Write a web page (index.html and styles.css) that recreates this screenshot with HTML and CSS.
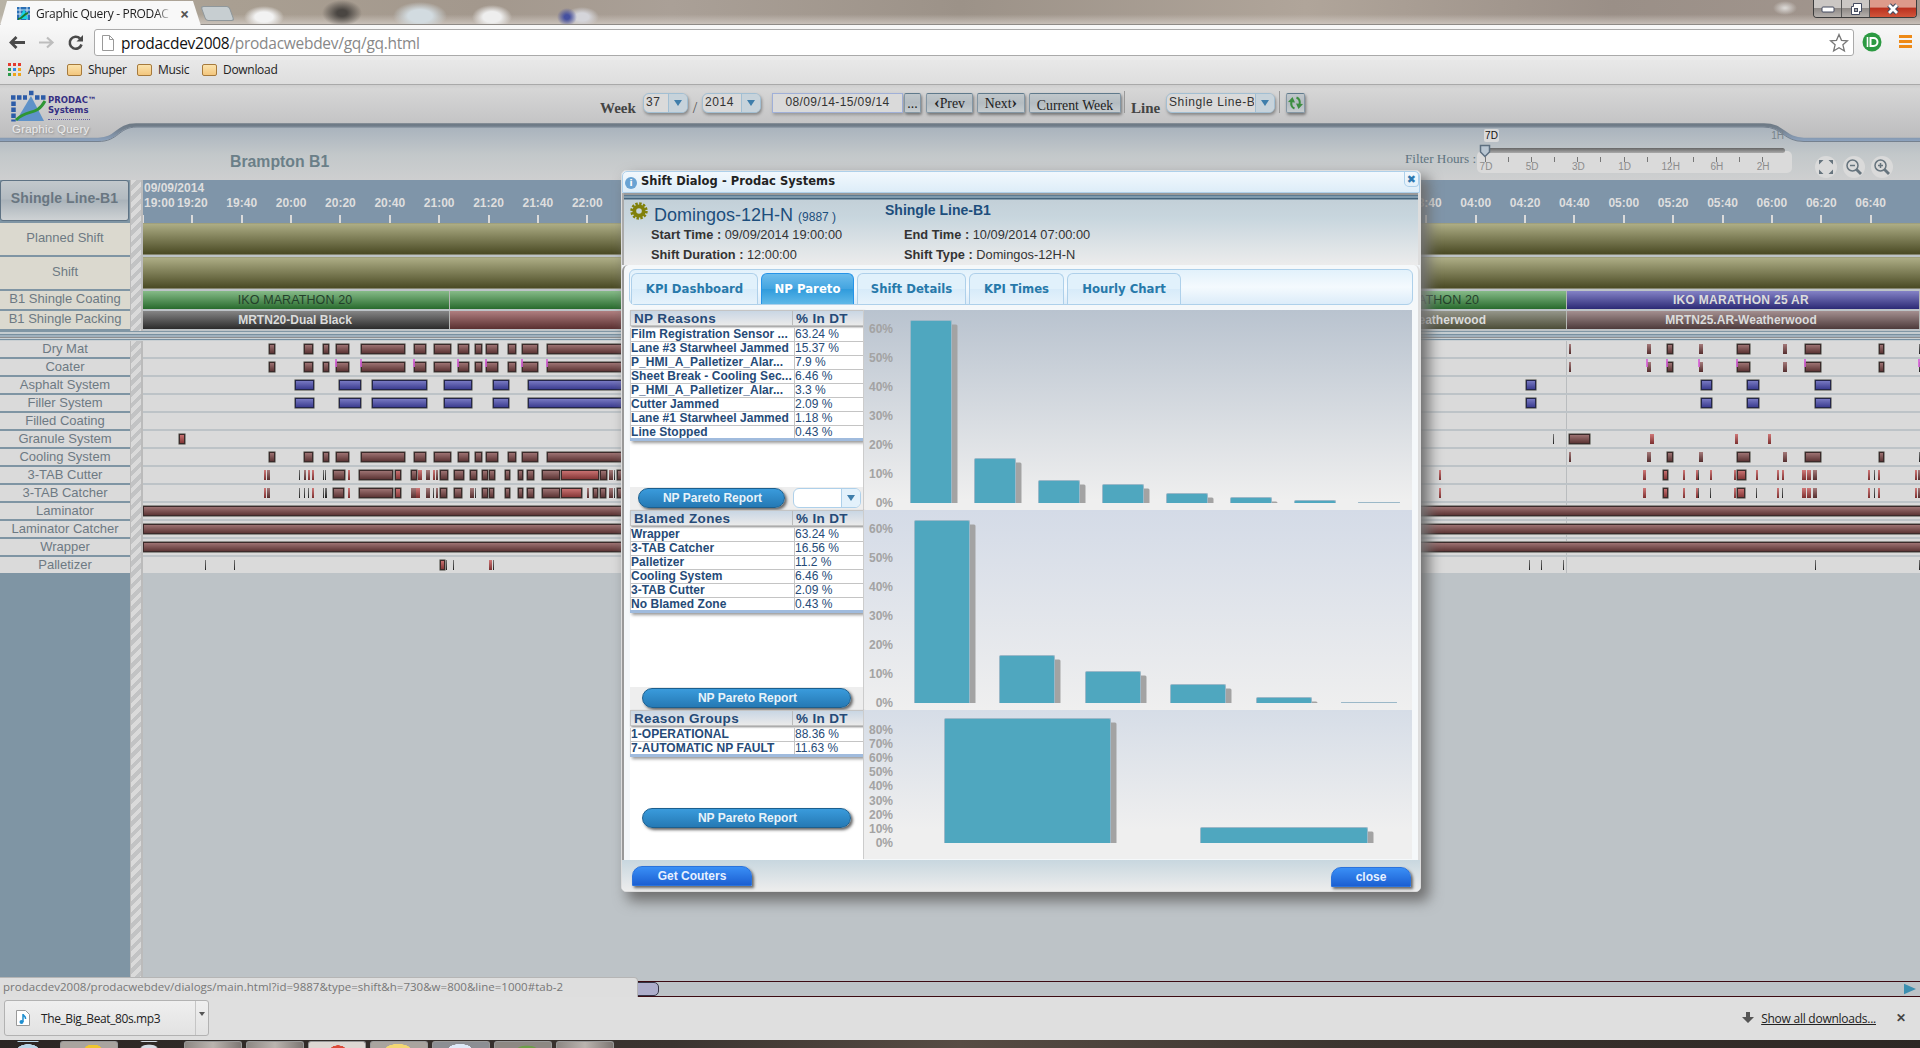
FILE: index.html
```html
<!DOCTYPE html>
<html lang="en">
<head>
    <meta charset="UTF-8">
    <title>Graphic Query - PRODAC</title>
    <link rel="stylesheet" href="styles.css">
</head>
<body>
    <!-- browser window -->
    <div class="tabstrip">
        <div class="tab">
            <svg class="favicon" width="13" height="13" viewBox="0 0 13 13"><rect width="13" height="13" fill="#2a6fb5"/><path d="M0 3h13M0 7h13M3 0v13M10 0v13" stroke="#cfe4f5" stroke-width="1"/><path d="M2 12L7 2l4 10z" fill="#19d3e6"/><path d="M1 12c5 0 5-5 10-6" stroke="#1c7a2d" stroke-width="2" fill="none"/></svg>
            <span>Graphic Query - PRODAC</span>
            <b>×</b>
        </div>
        <div class="new_tab"></div>
        <div class="win_btns">
            <div class="win_btn"><svg width="14" height="8"><rect x="1" y="2" width="12" height="5" rx="1" fill="#fff" stroke="#444b60"/></svg></div>
            <div class="win_btn"><svg width="14" height="14"><path d="M4.500 1.500h8v8h-2v3h-8v-8h2z" fill="#fff" stroke="#444b60"/><rect x="5.500" y="6.500" width="3" height="3" fill="#aaa" stroke="#444b60"/></svg></div>
            <div class="win_btn win_close"><svg width="14" height="12"><path d="M3 2l8 8M11 2l-8 8" stroke="#444b60" stroke-width="5"/><path d="M3 2l8 8M11 2l-8 8" stroke="#fff" stroke-width="2.800"/></svg></div>
        </div>
    </div>
    <div class="toolbar">
        <svg class="nav" width="84" height="30" viewBox="0 0 84 30">
            <path d="M11 14.500h14M16.500 9l-5.500 5.500 5.500 5.500" stroke="#4a4a4a" stroke-width="2.800" fill="none"/>
            <path d="M39 14.500h13M47 9.500l5.500 5-5.500 5" stroke="#bdbdbd" stroke-width="2.200" fill="none"/>
            <path d="M80 10.500a6 6 0 1 0 1.500 6" stroke="#4a4a4a" stroke-width="2.600" fill="none"/><path d="M83 7v6.500h-6.500z" fill="#4a4a4a"/>
        </svg>
        <div class="omnibox">
            <svg width="12" height="16"><path d="M.5.500h7l4 4v11h-11zM7.500.500v4h4" fill="#fff" stroke="#999"/></svg>
            <span><i>prodacdev2008</i>/prodacwebdev/gq/gq.html</span>
            <svg class="star" width="20" height="20" viewBox="0 0 20 20"><path d="M10 1.500l2.500 5.800 6 .500-4.600 4 1.500 6.200-5.400-3.300-5.400 3.300 1.500-6.200-4.600-4 6-.500z" fill="none" stroke="#777" stroke-width="1.300"/></svg>
        </div>
        <svg class="ext" width="20" height="20" viewBox="0 0 20 20"><circle cx="10" cy="10" r="9.500" fill="#2c9a42"/><path d="M5.500 5v10" stroke="#fff" stroke-width="1.600"/><path d="M8.500 6h3a4 4 0 0 1 0 8h-3z" fill="none" stroke="#fff" stroke-width="2"/></svg>
        <div class="burger"><u></u><u></u><u></u></div>
    </div>
    <div class="bookmarks">
        <div class="apps"><i class="r"></i><i class="r"></i><i class="r"></i><i class="g"></i><i class="b"></i><i class="y"></i><i class="g"></i><i class="y"></i><i class="y"></i></div>
        <span class="bm_apps">Apps</span>
        <i class="folder"></i><span class="bm_1">Shuper</span>
        <i class="folder"></i><span class="bm_2">Music</span>
        <i class="folder"></i><span>Download</span>
    </div>

    <div class="page">
        <div class="head">
            <svg class="head_shape" width="1920" height="95" viewBox="0 0 1920 95">
                <defs>
                    <linearGradient id="hg" x1="0" y1="0" x2="0" y2="1"><stop offset="0" stop-color="#c4c4c4"/><stop offset=".15" stop-color="#d6d6d6"/><stop offset="1" stop-color="#bcbcbd"/></linearGradient>
                    <linearGradient id="hs" gradientUnits="userSpaceOnUse" x1="0" y1="38" x2="0" y2="56"><stop offset="0" stop-color="#6d7984"/><stop offset=".35" stop-color="#74818f"/><stop offset="1" stop-color="#8ca2be"/></linearGradient>
                </defs>
                <path d="M-5 -5H1925V54.500H1804C1784 54.500 1784 40 1764 40H136C116 40 118 54.500 98 54.500H-5Z" fill="url(#hg)" stroke="url(#hs)" stroke-width="3.600"/>
                <path d="M0 56.500H98C119 56.500 118 42 137 42H1763C1783 42 1783 56.500 1804 56.500H1920" fill="none" stroke="#75818f" stroke-width="1"/>
            </svg>
            <div class="logo">
                <svg width="38" height="32" viewBox="0 0 38 32">
                    <path d="M1 7.500h16M25 7.500h11M3.500 11.500v20M19 3h5" stroke="#2d5ca8" stroke-width="4.500" stroke-dasharray="4.500 1.500" fill="none"/>
                    <path d="M6 31L21 6l13 25z" fill="#5f92c8"/>
                    <path d="M6 30c12-12 20-3 29-19" stroke="#2f9634" stroke-width="3" fill="none"/>
                </svg>
                <div class="logo_txt">PRODAC™<br>Systems<hr></div>
                <p>Graphic Query</p>
            </div>
            <div class="controls">
                <label class="lb_week">Week</label>
                <div class="sel sel_week"><span>37</span><i></i></div>
                <span class="slash">/</span>
                <div class="sel sel_year"><span>2014</span><i></i></div>
                <div class="date">08/09/14-15/09/14</div>
                <button class="dots">...</button>
                <button class="prev"><b>‹</b>Prev</button>
                <button class="next">Next<b>›</b></button>
                <button class="cur">Current Week</button>
                <div class="sep"></div>
                <label class="lb_line">Line</label>
                <div class="sel sel_line"><span>Shingle Line-B1</span><i></i></div>
                <div class="sep sep2"></div>
                <button class="refresh"><svg width="15" height="16" viewBox="0 0 15 16"><path d="M6.500 13.500C3 12 2.800 9 3.500 6M8.500 2.500c3.500 1.500 3.700 4.500 3 7.500" stroke="#3e8e41" stroke-width="2" fill="none"/><path d="M0 7l4.500-5L7 7.500zM15 9l-4.500 5L8 8.500z" fill="#3e8e41"/></svg></button>
            </div>
            <div class="sub">
                <h1>Brampton B1</h1>
                <span class="filter_lb">Filter Hours :</span>
                <div class="slider">
                    <div class="bubbles"><b>7D</b><em>1H</em></div>
                    <div class="track"></div>
                    <svg class="knob" width="12" height="14" viewBox="0 0 12 14"><path d="M1.500 1.500h9v6.500l-4.500 4.500-4.500-4.500z" fill="#b9c6d2" stroke="#5d6f80" stroke-width="1.500"/></svg>
                    <div class="scale" id="scale"></div>
                </div>
                <div class="zooms">
                    <svg width="22" height="22" viewBox="0 0 22 22"><circle cx="11" cy="11" r="11" fill="#dadada"/><path d="M4 4h4.500L4 8.500zM18 4h-4.500L18 8.500zM4 18h4.500L4 13.500zM18 18h-4.500l4.500-4.500z" fill="#66747e"/></svg>
                    <svg width="22" height="22" viewBox="0 0 22 22"><circle cx="11" cy="11" r="11" fill="#dadada"/><circle cx="9.500" cy="9.500" r="5.500" fill="none" stroke="#66747e" stroke-width="1.500"/><path d="M7 9.500h5" stroke="#66747e" stroke-width="1.500"/><path d="M13.500 13.500l4.500 4.500" stroke="#66747e" stroke-width="2.800"/></svg>
                    <svg width="22" height="22" viewBox="0 0 22 22"><circle cx="11" cy="11" r="11" fill="#dadada"/><circle cx="9.500" cy="9.500" r="5.500" fill="none" stroke="#66747e" stroke-width="1.500"/><path d="M7 9.500h5M9.500 7v5" stroke="#66747e" stroke-width="1.500"/><path d="M13.500 13.500l4.500 4.500" stroke="#66747e" stroke-width="2.800"/></svg>
                </div>
            </div>
        </div>

        <div class="gantt gantt_top">
            <div class="labels">
                <div class="line_btn"><button>Shingle Line-B1</button></div>
                <div class="lbl tall">Planned Shift</div>
                <div class="lbl tall">Shift</div>
                <div class="lbl mid">B1 Shingle Coating</div>
                <div class="lbl mid">B1 Shingle Packing</div>
            </div>
            <div class="handle"></div>
            <div class="rows">
                <div class="times" id="times"><span class="day">09/09/2014</span></div>
                <div class="shift"></div>
                <div class="shift"></div>
                <div class="prod">
                    <div class="seg green w1 dark">IKO MARATHON 20</div>
                    <div class="seg green w2 dark"><span>IKO MARATHON 20</span></div>
                    <div class="seg blue w3">IKO MARATHON 25 AR</div>
                </div>
                <div class="prod">
                    <div class="seg black w1">MRTN20-Dual Black</div>
                    <div class="seg red w2a"></div>
                    <div class="seg olive w2b"><span>MRTN20-Weatherwood</span></div>
                    <div class="seg mauve w3">MRTN25.AR-Weatherwood</div>
                </div>
            </div>
        </div>
        <div class="divider"></div>
        <div class="gantt gantt_low">
            <div class="labels" id="labels"></div>
            <div class="handle"></div>
            <div class="rows" id="rows"></div>
        </div>

        <div class="hscroll"><div class="thumb"></div><i></i></div>
        <div class="status">prodacdev2008/prodacwebdev/dialogs/main.html?id=9887&amp;type=shift&amp;h=730&amp;w=800&amp;line=1000#tab-2</div>

        <!-- shift dialog -->
        <div class="dialog">
            <div class="dlg_title">
                <i>i</i><span>Shift Dialog - Prodac Systems</span>
                <div class="dlg_x">✖</div>
            </div>
            <div class="dlg_head">
                <svg class="gear" width="18" height="18" viewBox="0 0 18 18"><circle cx="9" cy="9" r="7.400" fill="none" stroke="#80800a" stroke-width="2.600" stroke-dasharray="2.400 1.474"/><circle cx="9" cy="9" r="4.700" fill="none" stroke="#80800a" stroke-width="3.800"/></svg>
                <div class="dlg_left">
                    <h2>Domingos-12H-N <small>(9887 )</small></h2>
                    <p><b>Start Time :</b> 09/09/2014 19:00:00</p>
                    <p><b>Shift Duration :</b> 12:00:00</p>
                </div>
                <div class="dlg_right">
                    <h3>Shingle Line-B1</h3>
                    <p><b>End Time :</b> 10/09/2014 07:00:00</p>
                    <p><b>Shift Type :</b> Domingos-12H-N</p>
                </div>
            </div>
            <div class="dlg_body">
                <div class="tabs">
                    <a class="t1">KPI Dashboard</a>
                    <a class="t2 on">NP Pareto</a>
                    <a class="t3">Shift Details</a>
                    <a class="t4">KPI Times</a>
                    <a class="t5">Hourly Chart</a>
                </div>
                <div class="pareto">
                    <div class="side">
                        <div class="thead"><span>NP Reasons</span><span>% In DT</span></div>
                        <div class="tbody">
                            <div><b>Film Registration Sensor ...</b><span>63.24 %</span></div>
                            <div><b>Lane #3 Starwheel Jammed</b><span>15.37 %</span></div>
                            <div><b>P_HMI_A_Palletizer_Alar...</b><span>7.9 %</span></div>
                            <div><b>Sheet Break - Cooling Sec...</b><span>6.46 %</span></div>
                            <div><b>P_HMI_A_Palletizer_Alar...</b><span>3.3 %</span></div>
                            <div><b>Cutter Jammed</b><span>2.09 %</span></div>
                            <div><b>Lane #1 Starwheel Jammed</b><span>1.18 %</span></div>
                            <div><b>Line Stopped</b><span>0.43 %</span></div>
                        </div>
                        <div class="actions">
                            <button class="report short">NP Pareto Report</button>
                            <div class="sel sel_dlg"><span></span><i></i></div>
                        </div>
                    </div>
                    <div class="chart c1" data-max="60" data-step="29" data-scale="2.9" data-values="63.24,15.37,7.9,6.46,3.3,2.09,1.18,0.43"></div>
                </div>
                <div class="pareto">
                    <div class="side">
                        <div class="thead"><span>Blamed Zones</span><span>% In DT</span></div>
                        <div class="tbody">
                            <div><b>Wrapper</b><span>63.24 %</span></div>
                            <div><b>3-TAB Catcher</b><span>16.56 %</span></div>
                            <div><b>Palletizer</b><span>11.2 %</span></div>
                            <div><b>Cooling System</b><span>6.46 %</span></div>
                            <div><b>3-TAB Cutter</b><span>2.09 %</span></div>
                            <div><b>No Blamed Zone</b><span>0.43 %</span></div>
                        </div>
                        <div class="actions"><button class="report">NP Pareto Report</button></div>
                    </div>
                    <div class="chart c2" data-max="60" data-step="29" data-scale="2.9" data-values="63.24,16.56,11.2,6.46,2.09,0.43"></div>
                </div>
                <div class="pareto last">
                    <div class="side">
                        <div class="thead"><span>Reason Groups</span><span>% In DT</span></div>
                        <div class="tbody">
                            <div><b>1-OPERATIONAL</b><span>88.36 %</span></div>
                            <div><b>7-AUTOMATIC NP FAULT</b><span>11.63 %</span></div>
                        </div>
                        <div class="actions"><button class="report">NP Pareto Report</button></div>
                    </div>
                    <div class="chart c3" data-max="80" data-step="14.150" data-scale="1.415" data-values="88.36,11.63"></div>
                </div>
            </div>
            <div class="dlg_foot">
                <button>Get Couters</button>
                <button class="dlg_close">close</button>
            </div>
        </div>
    </div>

    <div class="shelf">
        <div class="dl">
            <svg width="14" height="16" viewBox="0 0 14 16"><path d="M.5.500h9l4 4v11h-13z" fill="#fff" stroke="#999"/><path d="M7 4v8M7 4c0 2 3 2 2.500 5" stroke="#1f8fd0" stroke-width="1.500" fill="none"/><circle cx="5.500" cy="12" r="2" fill="#1f8fd0"/></svg>
            <span>The_Big_Beat_80s.mp3</span>
            <i></i>
        </div>
        <svg class="dl_arrow" width="12" height="12" viewBox="0 0 12 12"><path d="M4 0h4v5h4l-6 6-6-6h4z" fill="#555"/></svg>
        <a>Show all downloads...</a>
        <b>✕</b>
    </div>
    <div class="taskbar">
        <i class="start"></i><i class="ie"></i><i class="off vs"></i><i></i><i></i><i class="chrome"></i><i class="fold"></i><i class="doc"></i><i class="xl"></i><i></i>
    </div>
    <script src="script.js"></script>
</body>
</html>
```
FILE: styles.css
```css
* {
    box-sizing: border-box;
}

body {
    margin: 0;
    height: 1048px;
    overflow: hidden;
    display: flex;
    flex-direction: column;
    font-family: "Liberation Sans", Arial, sans-serif;
    font-size: 13px;
    background: #bdc3c7;
}

button {
    font-family: inherit;
    padding: 0;
    margin: 0;
    white-space: nowrap;
}

h1, h2, h3, p {
    margin: 0;
}

i {
    font-style: normal;
}

/* browser */
.tabstrip {
    height: 25px;
    flex: none;
    display: flex;
    background:
        radial-gradient(ellipse 20px 11px at 264px 17px, #f2f2f2 45%, transparent),
        radial-gradient(ellipse 20px 13px at 342px 13px, #4a4642 25%, transparent),
        radial-gradient(ellipse 27px 14px at 420px 16px, #d2dbe0 45%, transparent),
        radial-gradient(ellipse 20px 12px at 492px 17px, #eee 45%, transparent),
        radial-gradient(ellipse 10px 9px at 567px 17px, #4550a0 25%, transparent),
        radial-gradient(ellipse 17px 10px at 582px 17px, #d5d5da 40%, transparent),
        radial-gradient(ellipse 12px 7px at 1785px 8px, #d8d5d2 10%, transparent),
        linear-gradient(to bottom, transparent 60%, rgba(215, 208, 202, 0.7)),
        linear-gradient(to right, #b8b3a6, #a99f92 12%, #a3988d 25%, #aaa097 35%, #9c9288 50%, #b0a59a 68%, #9a8f87 84%, #a3978f);
    border-bottom: 1px solid #8e8a86;
}

.tab {
    width: 201px;
    height: 25px;
    margin-top: 1px;
    padding-left: 17px;
    display: flex;
    align-items: center;
    background: #f8f8f8;
    clip-path: polygon(0 100%, 7px 0, 193px 0, 100% 100%);
    font-family: "Open Sans", sans-serif;
    font-size: 12px;
    color: #222;
}

.tab span {
    width: 138px;
    margin-left: 6px;
    overflow: hidden;
    white-space: nowrap;
    letter-spacing: -0.3px;
    -webkit-mask-image: linear-gradient(to right, #000 120px, transparent 136px);
}

.tab b {
    margin-left: 6px;
    font-size: 16px;
    color: #555;
}

.new_tab {
    width: 29px;
    height: 15px;
    margin: 6px 0 0 2px;
    transform: skewX(20deg);
    border: 1px solid #8f979b;
    border-radius: 3px;
    background: #c7ced1;
}

.win_btns {
    margin: 0 3px 0 auto;
    height: 18px;
    display: flex;
    border: 1px solid #3c3c3c;
    border-top: 0;
    border-radius: 0 0 4px 4px;
    overflow: hidden;
}

.win_btn {
    width: 28px;
    display: flex;
    align-items: center;
    justify-content: center;
    background: linear-gradient(#cbc7c4 45%, #8f8a87 50%, #b5b0ac);
    border-right: 1px solid #555;
}

.win_close {
    width: 46px;
    border: 0;
    background: linear-gradient(#dd9a8b 40%, #bb3220 50%, #d2553b);
}

.toolbar {
    height: 35px;
    flex: none;
    display: flex;
    background: linear-gradient(#f8f8f8, #ebebeb);
}

.nav {
    margin-top: 3px;
}

.omnibox {
    width: 1760px;
    height: 27px;
    margin: 4px 0 0 10px;
    padding: 0 4px 0 7px;
    display: flex;
    align-items: center;
    background: #fff;
    border: 1px solid #aaa;
    border-radius: 3px;
    font-family: "Open Sans", sans-serif;
    font-size: 15.5px;
    letter-spacing: -0.28px;
    color: #888;
}

.omnibox span {
    margin-left: 7px;
}

.omnibox i {
    color: #111;
}

.star {
    margin-left: auto;
}

.ext {
    margin: 7px 0 0 8px;
}

.burger {
    margin: 10px 0 0 17px;
}

.burger u {
    display: block;
    width: 13px;
    height: 3px;
    margin-bottom: 2px;
    background: #ee8a17;
}

.bookmarks {
    height: 25px;
    flex: none;
    display: flex;
    align-items: center;
    padding: 0 0 5px 8px;
    background: linear-gradient(#e8e8e8, #dedede);
    border-bottom: 1px solid #a9a9a9;
    font-family: "Open Sans", sans-serif;
    font-size: 12px;
    letter-spacing: -0.3px;
    color: #222;
}

.apps {
    display: grid;
    grid-template-columns: repeat(3, 3px);
    gap: 2px;
}

.apps i {
    height: 3px;
}

.r { background: #e33b2e; }
.g { background: #2c9b4b; }
.b { background: #2f87e5; }
.y { background: #eea51d; }

.bm_apps { width: 39px; margin-left: 7px; }
.bm_1 { width: 49px; }
.bm_2 { width: 44px; }

.folder {
    width: 15px;
    height: 12px;
    margin-right: 6px;
    border: 1px solid #a67a3c;
    border-radius: 2px;
    background: linear-gradient(#fbe3ad, #f3c67d);
}

/* page header */
.page {
    position: relative;
    height: 912px;
    flex: none;
    display: flex;
    flex-direction: column;
    background: #bdc3c7;
    overflow: hidden;
}

.head {
    position: relative;
    height: 95px;
    flex: none;
    display: grid;
    grid-template-columns: 600px 1fr;
    grid-template-rows: 42px 53px;
    background: linear-gradient(#a9b3bd 42px, #c3c8ca 70px, #cecfd0);
}

.head_shape {
    position: absolute;
    left: 0;
    top: 0;
}

.logo {
    position: relative;
    height: 52px;
    padding: 5px 0 0 10px;
    display: grid;
    grid-template-columns: 38px 60px;
    grid-template-rows: 32px 14px;
}

.logo_txt {
    font: bold 8.5px/10px "DejaVu Sans", sans-serif;
    color: #352f83;
    padding-top: 5px;
    white-space: nowrap;
}

.logo_txt hr {
    width: 42px;
    margin: 4px 0 0;
    border: 0;
    border-top: 1px dotted #6660a0;
}

.logo p {
    grid-column: span 2;
    padding-left: 2px;
    font-size: 11.5px;
    letter-spacing: 0.2px;
    color: #ececec;
    text-shadow: 1px 1px 2px #888;
    line-height: 14px;
}

.controls {
    position: relative;
    height: 42px;
    display: flex;
    align-items: flex-start;
    padding-top: 8px;
}

.controls label {
    font: bold 15px/24px "Liberation Serif", serif;
    color: #444;
    padding-top: 3px;
}

.lb_week { width: 43px; }

.sel {
    height: 20px;
    display: flex;
    border: 1px solid #a2bfd3;
    border-radius: 6px;
    background: #dadada;
    box-shadow: 1px 2px 3px #888;
    font-size: 12px;
    line-height: 17px;
    color: #333;
    overflow: hidden;
}

.sel span {
    flex: 1;
    padding-left: 2px;
    overflow: hidden;
    white-space: nowrap;
    letter-spacing: 0.6px;
}

.sel i {
    width: 19px;
    display: flex;
    align-items: center;
    justify-content: center;
    border-left: 1px solid #a2bfd3;
    background: #c7d3db;
}

.sel i::after {
    content: "";
    border: 4.5px solid transparent;
    border-top: 6px solid #3f7eab;
    border-bottom: 0;
}

.sel_week { width: 45px; }
.slash { width: 14px; text-align: center; font: 16px/30px "Liberation Serif", serif; color: #555; }
.sel_year { width: 59px; margin-right: 11px; }

.date {
    width: 131px;
    height: 20px;
    border: 1px solid #a0b0d8;
    background: #dadada;
    box-shadow: 1px 2px 3px #999;
    font-size: 12px;
    line-height: 16px;
    text-align: center;
    letter-spacing: 0.4px;
    color: #333;
}

.controls button {
    height: 20px;
    border: 1px solid #8497a5;
    border-top-color: #5f7a8c;
    border-radius: 2px;
    background: linear-gradient(#c0c7cb, #b4bcc1 50%, #c6cccf);
    box-shadow: 1px 2px 3px #777;
    font: 13.8px/17px "Liberation Serif", serif;
    color: #222;
}

.controls button b {
    font-size: 17px;
    line-height: 15px;
}

.controls .dots { width: 17px; margin: 0 5px 0 1px; }
.controls .prev { width: 47px; margin-right: 4px; }
.controls .next { width: 48px; margin-right: 4px; }
.controls .cur { width: 92px; line-height: 23px; }
.sep { width: 1px; height: 22px; background: #999; margin: -2px 6px 0 3px; }
.lb_line { width: 35px; }
.sel_line { width: 109px; }
.sel_line span { flex: none; width: 87px; }
.sel_line i { margin-left: auto; }
.sep2 { margin-left: 4px; }
.controls .refresh { width: 19px; line-height: 0; }

.sub {
    position: relative;
    grid-column: 1 / 3;
    display: flex;
    padding-left: 230px;
}

.sub h1 {
    width: 1175px;
    font-size: 15.8px;
    line-height: 18px;
    padding-top: 26px;
    color: #6b7f88;
}

.filter_lb {
    width: 72px;
    padding-top: 24px;
    font: 13.2px/16px "Liberation Serif", serif;
    white-space: nowrap;
    color: #5f7480;
}

.slider {
    position: relative;
    width: 315px;
}

.bubbles {
    display: flex;
    justify-content: space-between;
    padding: 2px 8px 0 7px;
    height: 24px;
    font-size: 10px;
}

.bubbles b {
    width: 15px;
    height: 13px;
    font-weight: normal;
    line-height: 13px;
    text-align: center;
    background: #dadada;
    border-radius: 2px;
    color: #111;
}

.bubbles em {
    font-style: normal;
    line-height: 13px;
    color: #78838b;
}

.track {
    position: relative;
    z-index: 1;
    height: 5px;
    margin: -3px 7px 0 8px;
    border-radius: 3px;
    background: linear-gradient(#666, #aaa);
}

.knob {
    position: absolute;
    z-index: 2;
    left: 2px;
    top: 17px;
}

.scale {
    height: 22px;
    margin-top: -2px;
    padding-left: 8px;
    display: flex;
    background: #dadada;
    border-radius: 5px;
    font-size: 10px;
    color: #8c8c8c;
}

.scale span {
    width: 23.1px;
    flex: none;
    padding-top: 6px;
}

.scale span::before {
    content: "";
    display: block;
    width: 1px;
    height: 5px;
    background: #777;
}

.scale em {
    display: block;
    width: 24px;
    margin-left: -11px;
    font-style: normal;
    text-align: center;
    line-height: 10px;
}

.zooms {
    display: flex;
    gap: 6px;
    padding: 29px 0 0 23px;
}

/* timeline */
.gantt {
    display: flex;
    flex: none;
}

.gantt_low {
    flex: 1;
}

.labels {
    width: 130px;
    flex: none;
    background: #7f95a4;
}

.line_btn {
    height: 43px;
}

.line_btn button {
    width: 129px;
    height: 41px;
    border: 1px solid #5f7384;
    border-radius: 3px;
    background: linear-gradient(#c2c8cc, #b3bbc1 45%, #aab3ba 50%, #ced2d4);
    font-size: 14px;
    font-weight: bold;
    letter-spacing: 0.1px;
    color: #697681;
    padding-bottom: 5px;
}

.lbl {
    height: 18px;
    line-height: 15px;
    text-align: center;
    background: #dadada;
    border-bottom: 2px solid #7f95a4;
    color: #6d7983;
    white-space: nowrap;
}

.lbl.tall,
.lbl.mid {
    background: #dbd9cf;
}

.lbl.tall { height: 34px; line-height: 29px; }
.lbl.mid { height: 20px; line-height: 15px; }

.handle {
    width: 13px;
    flex: none;
    border: 1px solid #bbb;
    border-width: 0 2px 0 1px;
    background: repeating-linear-gradient(135deg, #dadada 0 4px, #c2c3c4 4px 8px);
}

.rows {
    flex: 1;
    overflow: hidden;
}

.times {
    position: relative;
    height: 43px;
    background: #7f95a9;
    font-size: 12px;
    font-weight: bold;
    color: #dedede;
}

.day {
    display: block;
    padding-left: 1px;
    line-height: 16px;
}

.times i {
    position: absolute;
    top: 16px;
    width: 40px;
    margin-left: -20px;
    line-height: 15px;
    text-align: center;
}

.times i::after {
    content: "";
    display: block;
    width: 2px;
    height: 8px;
    margin: 4px auto 0;
    background: #dadada;
}

.times .first {
    margin-left: 1px;
    text-align: left;
}

.times .first::after {
    margin-left: -1px;
    width: 1px;
}

.shift {
    height: 32px;
    margin-bottom: 2px;
    border-top: 1px solid #a0a07c;
    border-bottom: 1px solid #85856e;
    background: linear-gradient(#adad85, #4a4a24);
}

.prod {
    height: 18px;
    margin-bottom: 2px;
    display: flex;
}

.seg {
    flex: none;
    border-right: 1px solid #b5b8b5;
    font-size: 12px;
    font-weight: bold;
    line-height: 19px;
    text-align: center;
    letter-spacing: 0.02px;
    white-space: nowrap;
    overflow: hidden;
    color: #dcdcdc;
}

.seg.blue {
    letter-spacing: 0.3px;
}

.w1 { width: 307px; padding-right: 2px; }
.w2 { width: 1117px; }
.w2a { width: 860px; }
.w2b { width: 257px; text-align: right; padding-right: 80px; }
.w3 { width: 353px; padding-right: 4px; }

.seg.dark {
    font-weight: normal;
    font-size: 12.5px;
    letter-spacing: 0.1px;
    color: #23402a;
}

.seg.w2 {
    text-align: right;
    padding-right: 87px;
}

.green { background: linear-gradient(#86bb88, #286a2d); }
.blue { background: linear-gradient(#8482c6, #2c2a75); }
.black { background: linear-gradient(#858585, #2b2b2b); }
.red { background: linear-gradient(#b07f80, #592f30); }
.olive { background: linear-gradient(#95968a, #4c4d38); }
.mauve { background: linear-gradient(#a48f90, #4d3a3b); }

.divider {
    height: 10px;
    flex: none;
    background: linear-gradient(#8096a4 1px, #c4ccd0 1px 3px, #7890a0 3px 4px, #9fb0bd 4px 6px, #8d8f91 6px 7px, #c9cfd2 7px 8px, #7790a2 8px 9px, #c9cfd2 9px);
}

.row {
    position: relative;
    height: 18px;
    background: linear-gradient(to right, transparent 1423px, #b9bcbe 1423px 1424px, transparent 1424px), #dadada;
    border-bottom: 2px solid #bdc3c7;
}

.ev {
    position: absolute;
    top: 3px;
    height: 10px;
    background: linear-gradient(#a57a7a, #552e2e);
}

.ev.box {
    top: 2px;
    height: 12px;
    border: 1px solid #8f8f8b;
    border-radius: 1px;
    box-shadow: inset 0 0 0 1px #3b2a2a;
}

.ev.r { background: linear-gradient(#d07878, #7c3030); }
.ev.u { background: linear-gradient(#7f80c8, #35368a); box-shadow: inset 0 0 0 1px #24264a; }
.ev.k { background: linear-gradient(#777, #222); }
.ev.m { background: #d65fd6; top: 0; height: 8px; z-index: 1; opacity: 0.85; }

.hscroll {
    position: absolute;
    left: 0;
    right: 0;
    bottom: 0;
    height: 16px;
    border-top: 1px solid #3c0b12;
    border-bottom: 1px solid #3c0b12;
    background: #bdc3c7;
}

.hscroll .thumb {
    width: 659px;
    height: 14px;
    border: 1px solid #334;
    border-radius: 0 5px 5px 0;
    background: #aeaecb;
}

.hscroll i {
    position: absolute;
    right: 4px;
    top: 0;
    width: 15px;
    height: 14px;
    background: #3c8fb0;
    clip-path: polygon(20% 12%, 100% 50%, 20% 88%);
}

.status {
    position: absolute;
    left: 0;
    bottom: -1px;
    width: 638px;
    height: 21px;
    padding-left: 3px;
    line-height: 18px;
    background: #dedede;
    border: 1px solid #b5b5b5;
    border-left: 0;
    border-radius: 0 4px 0 0;
    font-family: "Open Sans", sans-serif;
    font-size: 11.5px;
    letter-spacing: 0.02px;
    color: #777;
    white-space: nowrap;
}

/* dialog */
.dialog {
    position: absolute;
    left: 621px;
    top: 85px;
    width: 800px;
    height: 722px;
    display: flex;
    flex-direction: column;
    border: 1px solid #ddd;
    border-radius: 5px;
    background: #f0f3f6;
    box-shadow: 7px 8px 14px 1px #6f6f6f;
}

.dlg_title {
    height: 22px;
    display: flex;
    background: linear-gradient(#f2f8fd, #ddedf8);
    border: 1px solid #aed0ea;
    border-radius: 5px 5px 0 0;
    font: bold 11.5px/18px "DejaVu Sans", sans-serif;
    letter-spacing: 0.05px;
    color: #222;
}

.dlg_title i {
    width: 12px;
    height: 12px;
    margin: 5px 4px 0 2px;
    border-radius: 6px;
    background: #69a3d3;
    color: #fff;
    font-size: 9px;
    line-height: 12px;
    text-align: center;
}

.dlg_x {
    width: 15px;
    height: 15px;
    margin-left: auto;
    border: 1px solid #aed0ea;
    border-top: 0;
    border-radius: 0 4px 4px 5px;
    font-size: 11px;
    line-height: 15px;
    text-align: center;
    color: #2e78b0;
}

.dlg_head {
    height: 72px;
    display: flex;
    padding-top: 7px;
    border-left: 2px solid #aaa;
    border-right: 2px solid #ddd;
    background: linear-gradient(#999 2px, #5b7b92 2px 3px, #7f9bae 3px 5px, #45657d 5px 6px, #c3d0d8 7px, #c8d6de 25px, #ececec);
    font-size: 12.8px;
    color: #333;
}

.gear {
    margin: 2px 0 0 6px;
}

.dlg_left {
    width: 240px;
    padding-left: 6px;
}

.dlg_left h2 {
    height: 25px;
    font-size: 18px;
    font-weight: normal;
    line-height: 30px;
    color: #1d4e7c;
    white-space: nowrap;
}

.dlg_left small {
    font-size: 12px;
}

.dlg_left p {
    margin-left: -3px;
    line-height: 20px;
}

.dlg_right h3 {
    height: 25px;
    margin-left: -3px;
    font-size: 14px;
    line-height: 20px;
    color: #1d4e7c;
}

.dlg_right p {
    margin-left: 16px;
    line-height: 20px;
}

.dlg_body {
    height: 595px;
    padding: 3px 6px 0 6px;
    border-left: 2px solid #999;
    border-right: 2px solid #ddd;
    border-radius: 6px 6px 0 0;
    background: #f5f8fa;
}

.tabs {
    height: 36px;
    margin: 1px -1px 5px -1px;
    padding: 3px 1px 0;
    display: flex;
    align-items: stretch;
    border: 1px solid #aed0ea;
    border-radius: 6px;
    background: linear-gradient(#e2f1fb, #f4fafe 50%, #dcecf9);
    font: bold 11.7px/31px "DejaVu Sans", sans-serif;
    color: #2779aa;
}

.tabs a {
    border: 1px solid #aed0ea;
    border-bottom: 0;
    border-radius: 6px 6px 0 0;
    background: linear-gradient(#e1f1fb 50%, #d7ebf9 50%, #e6f2fb);
    text-align: center;
    white-space: nowrap;
    margin-right: 3px;
}

.tabs .on {
    background: linear-gradient(#6cbcec, #43a4e0 50%, #2f9bdc 50%, #5fb8e8);
    border-color: #2694e8;
    color: #fff;
}

.t1 { width: 127px; }
.t2 { width: 93px; }
.t3 { width: 109px; }
.t4 { width: 95px; }
.t5 { width: 114px; }

.pareto {
    height: 200px;
    margin-left: 0;
    display: flex;
}

.pareto.last {
    height: 151px;
}

.side {
    width: 233px;
    display: flex;
    flex-direction: column;
    background: #fff;
}

.thead {
    width: 234px;
    height: 16px;
    margin-bottom: 2px;
    flex: none;
    display: flex;
    border: 1px solid #c4c4c4;
    background: linear-gradient(#c9d6e4, #eaeaea);
    box-shadow: 1px 1px 2px #888;
    font-size: 13.5px;
    font-weight: bold;
    line-height: 15px;
    letter-spacing: 0.35px;
    color: #254a77;
}

.thead span:first-child {
    width: 162px;
    padding-left: 3px;
    border-right: 1px solid #bbb;
}

.thead span {
    padding-left: 3px;
}

.tbody {
    border-bottom: 3px solid #a0bbdd;
    box-shadow: 2px 2px 3px #999;
    font-size: 12px;
    line-height: 12px;
    color: #254a77;
}

.tbody div {
    height: 14px;
    display: flex;
    border-left: 1px solid #ccc;
    border-bottom: 1px solid #c4c4c4;
    white-space: nowrap;
}

.tbody div:last-child {
    height: 12px;
    border-bottom: 0;
}

.tbody b {
    width: 164px;
    border-right: 1px solid #c4c4c4;
    letter-spacing: 0.05px;
    overflow: hidden;
}

.actions {
    height: 23px;
    margin-top: auto;
    padding-top: 1px;
    display: flex;
    background: #eee;
}

.last .actions {
    margin-bottom: 31px;
    background: #fff;
}

.report {
    width: 209px;
    height: 20px;
    margin-left: 12px;
    padding-left: 2px;
    border: 1px solid #1c5f8e;
    border-radius: 10px;
    background: linear-gradient(#3a9bdc, #2579b4);
    box-shadow: 2px 2px 3px #666;
    font-size: 12px;
    font-weight: bold;
    line-height: 17px;
    color: #e8f3fa;
}

.report.short {
    width: 147px;
    margin: 0 8px;
}

.sel_dlg {
    width: 68px;
    background: #fff;
    border-color: #aed0ea;
    box-shadow: none;
}

.sel_dlg i {
    background: #e3f1fb;
    border-color: #aed0ea;
}

.chart {
    width: 549px;
    padding-bottom: 7px;
    display: flex;
    align-items: flex-end;
    border-left: 1px solid #ccc;
    background: linear-gradient(#d4dbe7, #efefef);
}

.c1 {
    background: linear-gradient(#b9c3cf, #efefef 95%);
}

.c3 {
    height: 149px;
    padding-bottom: 16px;
    background: linear-gradient(#d6dde7, #efefef 80%);
}

.axis {
    width: 29px;
    flex: none;
    margin-bottom: -7px;
    display: flex;
    flex-direction: column;
    font-size: 12px;
    font-weight: bold;
    text-align: right;
    color: #a3a3a3;
}

.axis span {
    display: flex;
    align-items: flex-end;
    justify-content: flex-end;
    line-height: 14px;
}

.plot {
    flex: 1;
    height: 190px;
    display: flex;
    align-items: flex-end;
    overflow: hidden;
}

.c3 .plot { height: 130px; }

.bar {
    flex: none;
    background: #4fa7bf;
    border: 1px solid #9bb8c8;
    border-bottom: 0;
    border-radius: 2px 2px 0 0;
    box-shadow: 6px 4px 0 -0.5px #a3a3a3;
}

.c1 .plot { padding-left: 17px; gap: 22px; }
.c1 .bar { width: 42px; }
.c2 .plot { padding-left: 20.5px; gap: 29.5px; }
.c2 .bar { width: 56px; }
.c3 .plot { padding-left: 50.5px; gap: 89px; }
.c3 .bar { width: 167.5px; }

.dlg_foot {
    flex: 1;
    display: flex;
    justify-content: space-between;
    padding: 6px 9px 0 10px;
    border-radius: 0 0 5px 5px;
    background: linear-gradient(#c8d7df, #ededed);
}

.dlg_foot button {
    width: 120px;
    height: 20px;
    border: 1px solid #2a72dc;
    border-radius: 10px 10px 0 0;
    background: linear-gradient(#3a8ff6, #1b5fd2);
    box-shadow: 2px 2px 3px #666;
    font-size: 12px;
    font-weight: bold;
    line-height: 17px;
    color: #e6f0ff;
}

.dlg_foot .dlg_close {
    width: 80px;
    margin-top: 1px;
}

/* downloads */
.shelf {
    height: 43px;
    flex: none;
    display: flex;
    padding: 3px 14px 0 4px;
    background: #dfdfdf;
    font-family: "Open Sans", sans-serif;
    font-size: 12px;
    color: #222;
}

.dl {
    width: 205px;
    height: 36px;
    display: flex;
    align-items: center;
    padding-left: 11px;
    border: 1px solid #b2b2b2;
    border-radius: 3px;
    background: linear-gradient(#efefef, #e2e2e2);
}

.dl span {
    margin-left: 11px;
    letter-spacing: -0.4px;
}

.dl i {
    width: 13px;
    height: 34px;
    margin-left: auto;
    border-left: 1px solid #c5c5c5;
}

.dl i::after {
    content: "";
    display: block;
    margin: 11px 0 0 3px;
    width: 0;
    border: 3px solid transparent;
    border-top: 4px solid #555;
}

.dl_arrow {
    margin: 12px 7px 0 auto;
}

.shelf a {
    margin-top: 10px;
    letter-spacing: -0.25px;
    text-decoration: underline;
}

.shelf b {
    margin: 9px 0 0 20px;
    font-size: 12px;
    color: #444;
}

.taskbar {
    height: 8px;
    flex: none;
    display: flex;
    gap: 4px;
    padding-top: 1px;
    background: linear-gradient(to right, #2b2523, #3b3430 35%, #574c44 50%, #3d3530 70%, #2d2724);
}

.taskbar i {
    width: 58px;
    height: 8px;
    border: 1px solid #999;
    border-bottom: 0;
    border-radius: 3px 3px 0 0;
    background: linear-gradient(to right, #8c8783, #bab4af, #7d7773);
}

.taskbar .start {
    width: 56px;
    border-color: transparent;
    background: radial-gradient(ellipse 15px 8px at 27px 8px, #b9d4e6 70%, transparent 75%);
}

.taskbar .ie { background: radial-gradient(ellipse 12px 6px at 32px 7px, #f0c52e 70%, #a9a49f 75%); }
.taskbar .vs { border-color: transparent; background: radial-gradient(ellipse 12px 5px at 26px 6px, #d5dbe4 60%, transparent 75%); }
.taskbar .chrome { background: radial-gradient(ellipse 10px 5px at 29px 7px, #dc4a38 70%, #ddd7d2 75%); }
.taskbar .fold { background: radial-gradient(ellipse 15px 6px at 27px 7px, #f4d774 80%, #a9a49f 85%); }
.taskbar .doc { background: radial-gradient(ellipse 14px 6px at 27px 7px, #dfe9f7 80%, #8c8e93 85%); }
.taskbar .xl { background: radial-gradient(ellipse 14px 5px at 32px 7px, #6c9e4a 60%, #8d8883 75%); }
```
FILE: script.js
```js
// time labels, one every 20 minutes
const times = document.getElementById("times");
for (let k = 0; k < 36; k++) {
    // covered by the dialog
    if (k > 9 && k < 26) continue;
    const min = 19 * 60 + k * 20;
    const h = String(Math.floor(min / 60) % 24).padStart(2, "0");
    const m = String(min % 60).padStart(2, "0");
    const i = document.createElement("i");
    i.textContent = h + ":" + m;
    i.style.left = (k * 49.36) + "px";
    if (k === 0) i.className = "first";
    times.appendChild(i);
}

// slider scale
const steps = ["7D", "", "5D", "", "3D", "", "1D", "", "12H", "", "6H", "", "2H"];
document.getElementById("scale").innerHTML = steps.map(s => `<span><em>${s}</em></span>`).join("");

// events: start, end and type (b = box, s = small, r = red, R = red box, u = blue box, k = thin black, m = mark)
const mat = "268-276b 303-314b 322-330b 335-350b 360-406b 413-427b 433-452b 457-470b 474-483b 485-499b 507-517b 521-539b 546-700b 1569-1571s 1647-1651s 1666-1674b 1699-1703s 1736-1751b 1783-1787s 1804-1822b 1878-1885b 1919-1920k";
const marks = " 335-337m 360-362m 413-415m 457-459m 485-487m 521-523m 546-548m 1646-1648m 1666-1668m 1698-1700m 1736-1738m 1804-1806m 1918-1920m";
const tanks = "294-315u 338-362u 371-428u 443-473u 492-510u 527-700u 1525-1537u 1700-1713u 1746-1760u 1814-1832u";
const full = "142-1922b";
const data = [
    ["Dry Mat", mat],
    ["Coater", mat + marks],
    ["Asphalt System", tanks],
    ["Filler System", tanks],
    ["Filled Coating", ""],
    ["Granule System", "178-186R 1553-1554k 1568-1591b 1650-1654r 1735-1738r 1768-1771r"],
    ["Cooling System", mat],
    ["3-TAB Cutter", "264-266r 267-270s 299-300k 304-306s 308-310r 312-314r 323-324k 325-326k 332-346b 348-350r 358-394b 394-402R 410-418b 418-422r 426-430s 433-435r 436-438s 439-449b 453-465b 469-478b 481-489b 488-496b 504-511b 517-524b 526-535b 541-561b 560-600R 599-608b 609-613s 614-615k 616-630b 1439-1441r 1643-1646r 1662-1669R 1683-1685r 1696-1698r 1698-1699k 1710-1712r 1734-1736r 1736-1747R 1756-1758r 1777-1779r 1782-1784r 1802-1806r 1807-1811r 1813-1817s 1868-1870r 1874-1875k 1878-1880r 1915-1917r 1918-1920s"],
    ["3-TAB Catcher", "264-266r 267-270s 299-300k 304-305k 308-309k 312-314r 323-324k 325-327k 332-345b 348-350r 358-394b 394-402R 411-416s 416-420r 426-430s 433-434k 436-438s 439-448b 453-463b 470-474s 475-476k 481-489b 488-495b 504-511b 517-524b 526-535b 541-561b 560-583R 587-589s 592-599b 599-607b 609-613s 614-615k 616-630b 1439-1441r 1643-1646r 1662-1669R 1683-1685r 1696-1698r 1698-1699k 1710-1711k 1734-1736r 1736-1746R 1756-1757k 1777-1779r 1782-1783k 1802-1806r 1807-1811r 1813-1817s 1868-1870r 1874-1875k 1878-1880r 1915-1917r 1918-1920s"],
    ["Laminator", full],
    ["Laminator Catcher", full],
    ["Wrapper", full],
    ["Palletizer", "205-206k 234-235k 439-446R 446-447k 453-454k 489-492r 493-494k 1529-1530k 1541-1542k 1563-1564k 1815-1816k 1919-1920k"]
];
const kinds = { b: "box", s: "", r: "r", R: "box r", u: "box u", k: "k", m: "m" };

const labels = document.getElementById("labels");
const rows = document.getElementById("rows");
for (const [name, events] of data) {
    const lbl = document.createElement("div");
    lbl.className = "lbl";
    lbl.textContent = name;
    labels.appendChild(lbl);

    const row = document.createElement("div");
    row.className = "row";
    for (const e of events.split(" ").filter(Boolean)) {
        const [start, end] = e.slice(0, -1).split("-").map(Number);
        const ev = document.createElement("div");
        ev.className = "ev " + kinds[e.slice(-1)];
        ev.style.left = (start - 143) + "px";
        ev.style.width = (end - start) + "px";
        row.appendChild(ev);
    }
    rows.appendChild(row);
}

// pareto charts
document.querySelectorAll(".chart").forEach(chart => {
    const d = chart.dataset;
    let axis = "";
    for (let v = Number(d.max); v >= 0; v -= 10) {
        axis += `<span style="height:${d.step}px">${v}%</span>`;
    }
    const bars = d.values.split(",").map(v => `<div class="bar" style="height:${Math.max(1, v * d.scale)}px"></div>`).join("");
    chart.innerHTML = `<div class="axis">${axis}</div><div class="plot">${bars}</div>`;
});
```
